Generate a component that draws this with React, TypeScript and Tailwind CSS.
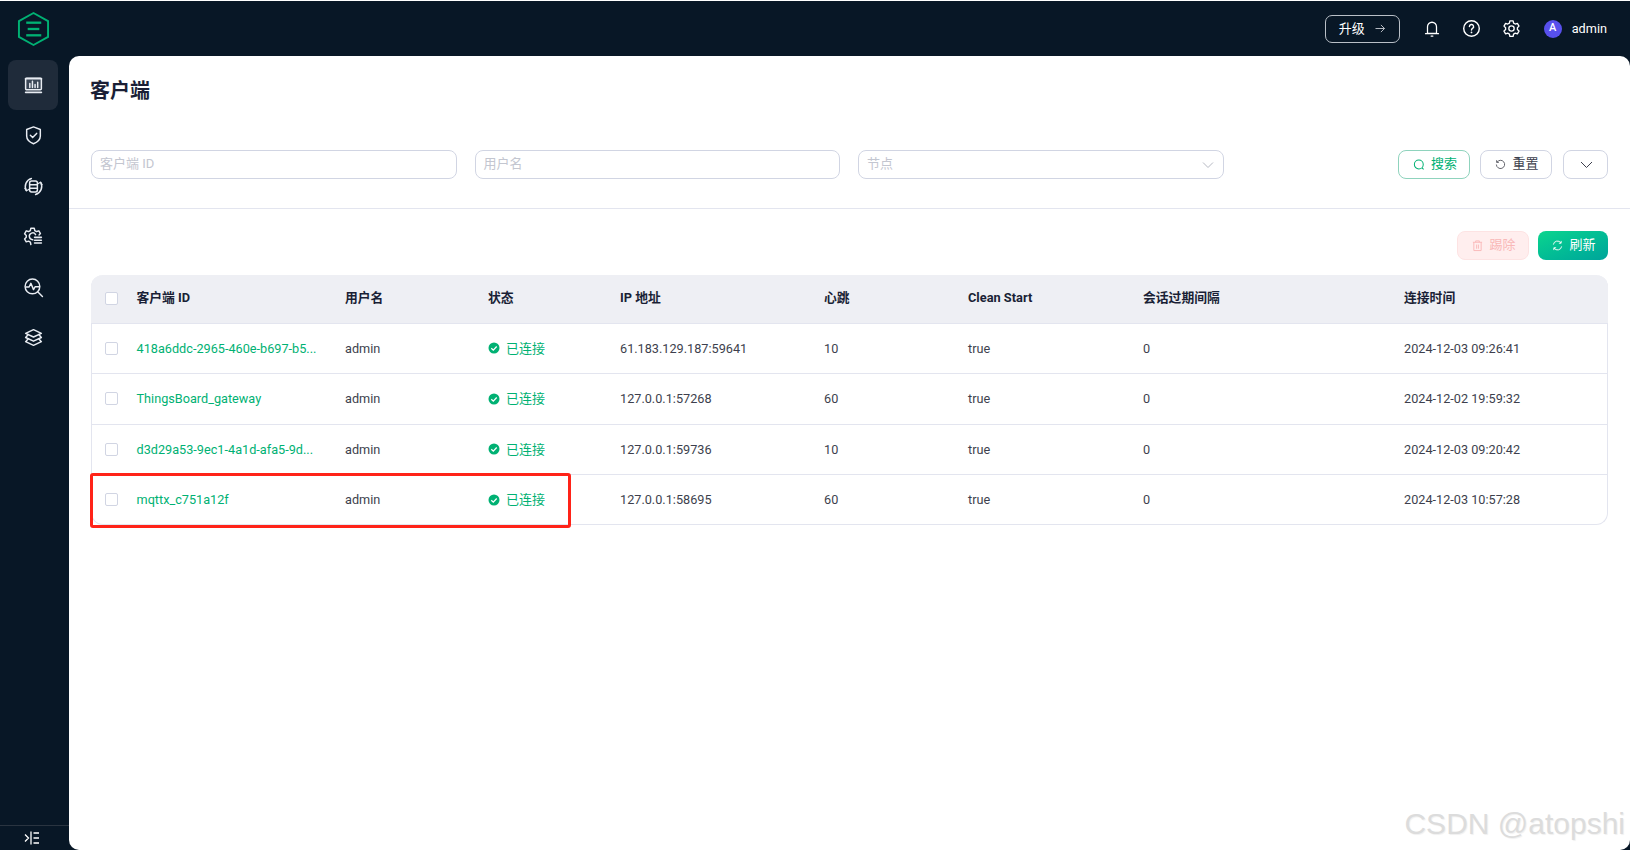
import React from "react";

const font = { fontFamily: '"Roboto","Noto Sans CJK SC",sans-serif' };

const Ico = ({ children, size = 20, className = "" }: { children: React.ReactNode; size?: number; className?: string }) => (
  <svg width={size} height={size} viewBox="0 0 20 20" fill="none" stroke="currentColor" strokeWidth={1.4} strokeLinecap="round" strokeLinejoin="round" className={className}>
    {children}
  </svg>
);

const Logo = () => (
  <svg width="33" height="36" viewBox="0 0 34 36" fill="none" stroke="#00b173" strokeWidth="2">
    <path d="M17 1.500 L32 9.800 V26.200 L17 34.500 L2 26.200 V9.800 Z" />
    <path d="M9.500 11.500 H25" strokeWidth="2.400" />
    <path d="M11 18 H23" strokeWidth="2.400" />
    <path d="M9.500 24.500 H25" strokeWidth="2.400" />
  </svg>
);

const navIcons = [
  <Ico key="a" size={21}><rect x="2.500" y="3" width="15" height="11" rx="1" fill="#3a4656" /><path d="M2.500 3.500h15" strokeWidth="1.800" /><path d="M6.500 12V8M9 12V6M11.500 12V9M14 12V7" /><path d="M2.500 16.500h15" strokeWidth="1.600" /></Ico>,
  <Ico key="b" size={21}><path d="M10 1.800 16.500 4.300v6.200c0 3.500-2.800 5.900-6.500 7.400-3.700-1.500-6.500-3.900-6.500-7.400V4.300Z" /><path d="m7 9.800 2.200 2.200 3.800-4" /></Ico>,
  <Ico key="c" size={21}><path d="M3.200 14A8 8 0 0 1 8 2.400M16.800 6A8 8 0 0 1 12 17.600" /><path d="M1.800 11.800 3.200 14l2.300-1.200M18.200 8.200 16.800 6l-2.300 1.200" strokeWidth="1.100" /><rect x="6.300" y="4.800" width="7.400" height="10.400" rx="1.800" /><path d="M6.300 8.300h7.400M6.300 11.700h7.400" /></Ico>,
  <Ico key="d" size={21}><path d="M7.500 17.600 7 15.400l-1.700-1-2.200.7-1.600-2.800L3.100 10.700V9L1.500 7.400l1.600-2.800 2.200.7 1.700-1L7.500 2.100h3.200l.5 2.200 1.700 1 2.200-.7 1.500 2.600-1.300 1.300" /><path d="M9.300 13A3.200 3.200 0 1 1 12 8.200" /><path d="M11 10.800h6.500M11 13.500h6.500M11 16.200h6.500" strokeWidth="1.500" /></Ico>,
  <Ico key="e" size={21}><circle cx="9" cy="9" r="7" /><path d="m14 14 4.500 4.500" /><path d="M3 9.500h2.800l1.700-3.500 2.500 6 1.500-2.700h3.500" /></Ico>,
  <Ico key="f" size={21}><path d="M10 2.500 17.500 6 10 9.500 2.500 6Z" /><path d="M5 7.200 2.500 10 10 13.500 17.500 10 15 7.200" /><path d="M5 11.200 2.500 14 10 17.500 17.500 14 15 11.200" /></Ico>,
];

const Sidebar = () => (
  <aside className="w-[69px] shrink-0 flex flex-col text-[#e8ecf2]">
    <div className="flex flex-col gap-[0.6px] pl-2 pt-1">
      {navIcons.map((ic, i) => (
        <div key={i} className={`w-[50px] h-[50px] rounded-[8px] flex items-center justify-center ${i === 0 ? "bg-[#1f2b3a]" : ""}`}>
          {ic}
        </div>
      ))}
    </div>
    <div className="mt-auto h-[25px] border-t border-[#2a3440] flex items-center justify-center pr-[5px]">
      <svg width="16" height="14" viewBox="0 0 16 14" fill="none" stroke="#fff" strokeWidth="1.300">
        <path d="M1 3.500 4.500 7 1 10.500M7 .5v13M9.500 2H15M9.500 7H15M9.500 12H15" />
      </svg>
    </div>
  </aside>
);

const Header = () => (
  <header className="h-[55px] flex items-center text-white">
    <div className="w-[69px] pl-[17px] flex"><Logo /></div>
    <div className="ml-auto flex items-center pr-[23px]">
      <div className="w-[75px] h-[28px] rounded-[7px] border border-[#b9bfc7] flex items-center pl-[13px] gap-[10px] text-[13px]">
        <span>升级</span>
        <svg width="10" height="9" viewBox="0 0 11 10" fill="none" stroke="#c8ccd2" strokeWidth="1"><path d="M0.500 5h10M6.500 1l4 4-4 4" /></svg>
      </div>
      <div className="ml-[22px] w-[20px] flex justify-center">
        <Ico size={18}><path d="M10 2.500a5 5 0 0 0-5 5v7.500h10V7.500a5 5 0 0 0-5-5ZM2.800 15.200h14.400M9 17.800h2" /></Ico>
      </div>
      <div className="ml-[20px] w-[20px] flex justify-center">
        <Ico size={19}><circle cx="10" cy="10" r="8.200" strokeWidth="1.500" /><path d="M7.800 8a2.200 2.200 0 1 1 3.300 1.900c-.7.400-1.100.9-1.100 1.700" strokeWidth="1.500" /><path d="M10 14v.2" strokeWidth="1.800" /></Ico>
      </div>
      <div className="ml-[20px] w-[20px] flex justify-center">
        <Ico size={19}><path d="M8.300 2h3.400l.5 2.300 1.800 1 2.200-.7 1.700 2.900-1.700 1.600v2l1.700 1.600-1.700 2.900-2.200-.7-1.800 1-.5 2.300H8.300l-.5-2.300-1.800-1-2.200.7-1.700-2.900 1.700-1.600v-2L2.100 7.500l1.700-2.900 2.200.7 1.800-1Z" /><circle cx="10" cy="10" r="2.800" /></Ico>
      </div>
      <div className="ml-[22px] w-[18px] h-[18px] rounded-full bg-[#5850ec] flex items-center justify-center text-[11px] font-medium">A</div>
      <span className="ml-[10px] text-[12.7px]">admin</span>
    </div>
  </header>
);

const Field = ({ ph, select }: { ph: string; select?: boolean }) => (
  <div className="w-[365.500px] h-[29px] rounded-[8px] border border-[#d1d5e3] flex items-center pl-[8px] pr-[9px] text-[13px] text-[#c3c6d0]">
    <span className="-mt-[2px]">{ph}</span>
    {select && (
      <svg className="ml-auto" width="12" height="8" viewBox="0 0 12 8" fill="none" stroke="#b5b8c2" strokeWidth="1"><path d="m1 1.500 5 5 5-5" /></svg>
    )}
  </div>
);

const Check = () => <span className="block w-[13px] h-[13px] rounded-[2px] border border-[#d1d5e3] bg-white" />;

const cols = "grid grid-cols-[45.500px_208.500px_143px_132px_204px_144px_175px_261px_1fr] items-center";

const rows = [
  ["418a6ddc-2965-460e-b697-b5...", "61.183.129.187:59641", "10", "2024-12-03 09:26:41"],
  ["ThingsBoard_gateway", "127.0.0.1:57268", "60", "2024-12-02 19:59:32"],
  ["d3d29a53-9ec1-4a1d-afa5-9d...", "127.0.0.1:59736", "10", "2024-12-03 09:20:42"],
  ["mqttx_c751a12f", "127.0.0.1:58695", "60", "2024-12-03 10:57:28"],
];

const Table = () => (
  <div className="relative mt-[15px] rounded-[12px] border border-[#e3e5ef] border-t-0 text-[12.7px] text-[#3d3f4d]">
    <div className={`${cols} h-[49px] bg-[#eeeff4] rounded-t-[12px] border-b border-[#e3e5ef] font-bold text-[#1a1f36] -mx-px text-[12.800px]`}>
      <div className="pl-[14px]"><Check /></div>
      {["客户端 ID", "用户名", "状态", "IP 地址", "心跳", "Clean Start", "会话过期间隔", "连接时间"].map((h) => (
        <div key={h} className="-mt-[2px]">{h}</div>
      ))}
    </div>
    {rows.map((r, i) => (
      <div key={i} className={`${cols} ${i < 3 ? "h-[50.600px] border-b border-[#e3e5ef]" : "h-[49px]"} -mx-px`}>
        <div className="pl-[14px]"><Check /></div>
        <div className="text-[#00b173]">{r[0]}</div>
        <div>admin</div>
        <div className="flex items-center gap-[6px] text-[#00b173] text-[13px]">
          <svg width="12" height="12" viewBox="0 0 12 12"><circle cx="6" cy="6" r="5.500" fill="#00b173" /><path d="m3.300 6.200 2 1.900 3.400-3.600" fill="none" stroke="#fff" strokeWidth="1.300" /></svg>
          <span>已连接</span>
        </div>
        <div>{r[1]}</div>
        <div>{r[2]}</div>
        <div>true</div>
        <div>0</div>
        <div>{r[3]}</div>
      </div>
    ))}
    <div className="absolute left-[-2px] top-[198px] w-[481px] h-[55.500px] rounded-[3px] border-[3px] border-[#ff2318]" />
  </div>
);

const BtnBase = "h-[29px] rounded-[8px] flex items-center justify-center text-[13px] gap-[6px] pl-[2px]";

export default function App() {
  return (
    <div className="relative w-[1630px] h-[851px] overflow-hidden bg-white" style={font}>
      <div className="absolute inset-x-0 top-px bottom-px bg-[#081726] flex flex-col">
        <Header />
        <div className="flex flex-1 min-h-0">
          <Sidebar />
          <main className="flex-1 bg-white rounded-[10px] overflow-hidden">
            <div className="border-b border-[#e3e5ef] h-[152.500px] px-[22px] pt-[21px]">
              <h1 className="text-[20px] leading-[28px] font-bold text-[#1a1f36] -ml-px">客户端</h1>
              <div className="mt-[45px] flex items-center">
                <Field ph="客户端 ID" />
                <div className="ml-[18px]"><Field ph="用户名" /></div>
                <div className="ml-[18px]"><Field ph="节点" select /></div>
                <div className={`${BtnBase} ml-auto w-[72px] border border-[#8fd3bd] text-[#00b173]`}>
                  <svg width="12" height="12" viewBox="0 0 13 13" fill="none" stroke="#00b173" strokeWidth="1.100"><circle cx="6.300" cy="6" r="4.800" /><path d="m9.800 9.500 1.700 1.700" /></svg>
                  <span className="-mt-[1px]">搜索</span>
                </div>
                <div className={`${BtnBase} ml-[10px] w-[72px] border border-[#d1d5e3] text-[#3d3f4d]`}>
                  <svg width="11" height="11" viewBox="0 0 12 12" fill="none" stroke="#55575f" strokeWidth="1"><path d="M2.200 3.500A4.500 4.500 0 1 1 1.500 6M1.800 1.300v2.400h2.400" /></svg>
                  <span className="-mt-[1px]">重置</span>
                </div>
                <div className={`${BtnBase} ml-[11px] w-[45px] border border-[#d1d5e3]`}>
                  <svg width="13" height="8" viewBox="0 0 13 8" fill="none" stroke="#3d3f4d" strokeWidth="1"><path d="m1 1 5.500 5.500L12 1" /></svg>
                </div>
              </div>
            </div>
            <div className="px-[22px] pt-[22px]">
              <div className="flex justify-end gap-[9px]">
                <div className={`${BtnBase} w-[72px] h-[28px] border border-[#fde3e3] bg-[#ffeeee] text-[#f9b8b8]`}>
                  <svg width="11" height="13" viewBox="0 0 12 13" fill="none" stroke="#f9b8b8" strokeWidth="1"><path d="M1 3h10M4 3V1.500h4V3M2 3v9h8V3M5 5.500V10M7 5.500V10" /></svg>
                  踢除
                </div>
                <div className={`${BtnBase} w-[70px] h-[28px] text-white bg-gradient-to-br from-[#0dd58d] to-[#00a49a]`}>
                  <svg width="11" height="11" viewBox="0 0 12 12" fill="none" stroke="#fff" strokeWidth="1"><path d="M1.500 5A4.500 4.500 0 0 1 9.800 3.300M10.500 7A4.500 4.500 0 0 1 2.200 8.700M10 1v2.500H7.500M2 11V8.500h2.500" /></svg>
                  刷新
                </div>
              </div>
              <Table />
            </div>
          </main>
        </div>
      </div>
      <div className="absolute right-[5px] bottom-[9px] text-[30px] leading-[36px] text-[#dcdcdc] [text-shadow:1px_1px_1px_#f0f0f0]" style={{ fontFamily: '"Liberation Sans",sans-serif' }}>CSDN @atopshi</div>
    </div>
  );
}
